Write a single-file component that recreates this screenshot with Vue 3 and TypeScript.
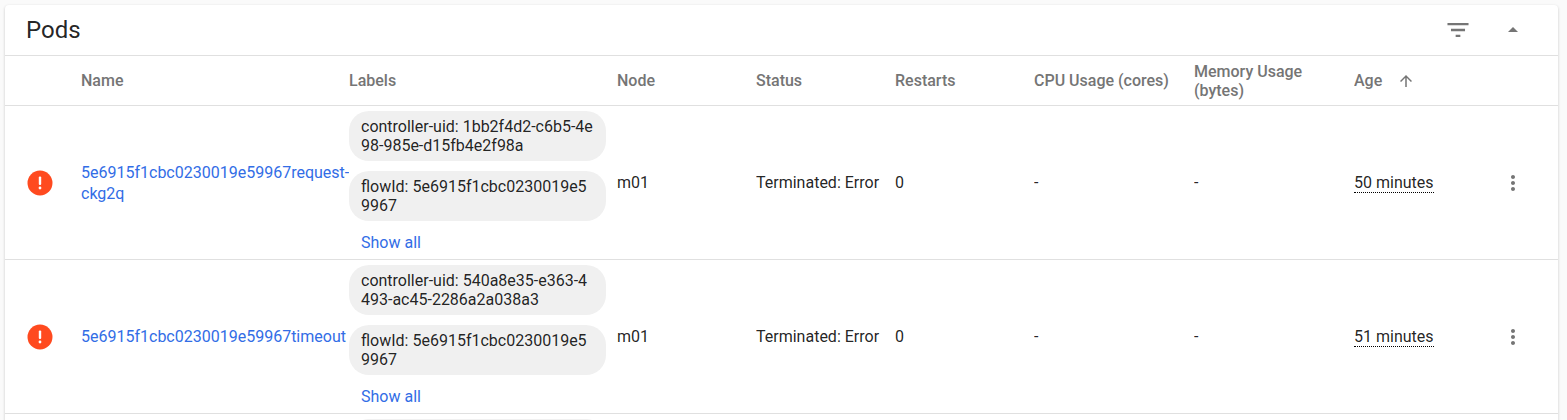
<script setup lang="ts">
interface Pod {
  uid: string
  name: string
  age: string
}
const pods: Pod[] = [
  { uid: '1bb2f4d2-c6b5-4e98-985e-d15fb4e2f98a', name: '5e6915f1cbc0230019e59967request-ckg2q', age: '50 minutes' },
  { uid: '540a8e35-e363-4493-ac45-2286a2a038a3', name: '5e6915f1cbc0230019e59967timeout', age: '51 minutes' },
]
</script>

<template>
  <div class="page">
    <section class="card">
      <header class="title-bar">
        <h1>Pods</h1>
        <div class="tools">
          <svg class="filter" width="24" height="24" viewBox="0 0 24 24"><path d="M10 18h4v-2h-4v2zM3 6v2h18V6H3zm3 7h12v-2H6v2z" /></svg>
          <svg class="caret" width="24" height="24" viewBox="0 0 24 24"><path d="M7 14l5-5 5 5z" /></svg>
        </div>
      </header>
      <div class="grid head">
        <div></div>
        <div>Name</div>
        <div>Labels</div>
        <div>Node</div>
        <div>Status</div>
        <div>Restarts</div>
        <div>CPU Usage (cores)</div>
        <div>Memory Usage (bytes)</div>
        <div class="age-head">Age
          <svg width="18" height="18" viewBox="0 0 24 24"><path d="M4 12l1.41 1.41L11 7.83V20h2V7.83l5.58 5.59L20 12l-8-8-8 8z" /></svg>
        </div>
        <div></div>
      </div>
      <div v-for="pod in pods" :key="pod.uid" class="grid row">
        <div class="status-cell">
          <svg width="26" height="26" viewBox="0 0 26 26">
            <circle cx="13" cy="13" r="12.5" fill="#ff4a1f" />
            <rect x="11.8" y="6.5" width="2.4" height="8.5" rx="1" fill="#fff" />
            <circle cx="13" cy="18" r="1.4" fill="#fff" />
          </svg>
        </div>
        <div class="name">{{ pod.name }}</div>
        <div class="labels">
          <span class="chip">controller-uid: {{ pod.uid }}</span>
          <span class="chip">flowId: 5e6915f1cbc0230019e59967</span>
          <span class="show">Show all</span>
        </div>
        <div>m01</div>
        <div>Terminated: Error</div>
        <div>0</div>
        <div>-</div>
        <div>-</div>
        <div><span class="age">{{ pod.age }}</span></div>
        <div class="menu">
          <svg width="24" height="24" viewBox="0 0 24 24"><path d="M12 8c1.1 0 2-.9 2-2s-.9-2-2-2-2 .9-2 2 .9 2 2 2zm0 2c-1.1 0-2 .9-2 2s.9 2 2 2 2-.9 2-2-.9-2-2-2zm0 6c-1.1 0-2 .9-2 2s.9 2 2 2 2-.9 2-2-.9-2-2-2z" /></svg>
        </div>
      </div>
      <div class="grid row">
        <div></div>
        <div></div>
        <div class="labels"><span class="chip">controller-uid: 0c7a1e52-98fd-4b21-a3c4-7e10d5b6f2c1</span></div>
      </div>
    </section>
  </div>
</template>

<style>
html, body {
  margin: 0;
  height: 420px;
  overflow: hidden;
  background: #fafafa;
}
</style>

<style scoped>
.page {
  padding: 5px 9px 0 5px;
  font-family: Roboto, "Liberation Sans", sans-serif;
  color: rgba(0, 0, 0, 0.87);
}
.card {
  background: #fff;
  border-radius: 4px 4px 0 0;
  box-shadow: 0 1px 3px rgba(0, 0, 0, 0.2);
  font-size: 16px;
}
.title-bar {
  height: 50px;
  box-sizing: border-box;
  display: flex;
  align-items: center;
  justify-content: space-between;
  padding: 0 33px 0 21px;
}
h1 {
  margin: 0;
  font-size: 24px;
  font-weight: 400;
}
.tools {
  display: flex;
  align-items: center;
  gap: 31px;
}
.tools svg {
  display: block;
  fill: #757575;
}
.filter {
  transform: scale(1.17);
}
.grid {
  display: grid;
  grid-template-columns: 76px 268px 268px 139px 139px 160px 160px 160px 1fr;
  grid-template-columns: 76px 268px 268px 139px 139px 139px 160px 160px 120px 1fr;
  align-items: center;
  border-top: 1px solid #e0e0e0;
}
.grid > div {
  padding-right: 5px;
  min-width: 0;
  overflow: hidden;
}
.head {
  height: 50px;
  box-sizing: border-box;
  color: #757575;
  font-weight: 500;
  line-height: 19px;
}
.age-head {
  display: flex;
  align-items: center;
  gap: 15px;
}
.age-head svg {
  fill: #757575;
}
.row {
  height: 154px;
  box-sizing: border-box;
  line-height: 21px;
}
.row:nth-of-type(2) {
  height: 154px;
}
.status-cell {
  padding-left: 22px;
  box-sizing: border-box;
  display: flex;
}
.status-cell svg {
  display: block;
}
.name {
  color: #326de6;
}
.labels {
  display: flex;
  flex-direction: column;
  align-items: flex-start;
  gap: 10px;
}
.grid > .labels {
  padding-right: 6px;
  height: 100%;
  box-sizing: border-box;
  padding-top: 5px;
}
.chip {
  box-sizing: border-box;
  width: 257px;
  padding: 6px 12px;
  background: #f0f0f0;
  border-radius: 20px;
  line-height: 19px;
  word-break: break-all;
}
.show {
  color: #326de6;
  padding-left: 12px;
  line-height: 21px;
  margin-top: 1px;
}
.age {
  border-bottom: 1px dotted #000;
}
.menu {
  padding-left: 0;
}
.menu svg {
  display: block;
  fill: #757575;
  margin-left: 27px;
}
</style>
